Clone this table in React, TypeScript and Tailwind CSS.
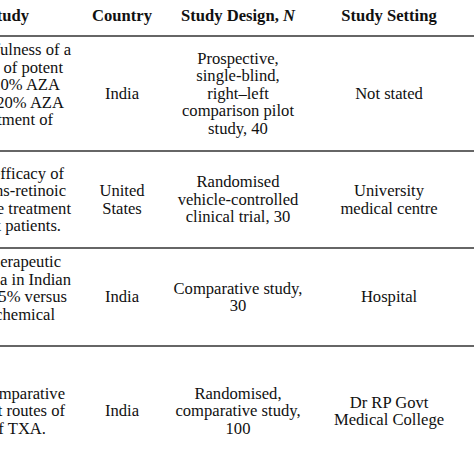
import React from "react";

type Line = { text: string; pad: string };

// first column is clipped on the left in the source, so each line is pinned to its right edge
function ClippedCell({ lines }: { lines: Line[] }) {
  return (
    <div className="flex h-full flex-col justify-center overflow-hidden">
      {lines.map((l, i) => (
        <div key={i} className={`flex justify-end ${l.pad}`}>
          <span className="shrink-0 whitespace-nowrap">{l.text}</span>
        </div>
      ))}
    </div>
  );
}

function Cell({ children }: { children: React.ReactNode }) {
  return <div className="text-center">{children}</div>;
}

const rows = [
  {
    h: "h-[115px]",
    aim: [
      { text: "To assess the usefulness of a", pad: "pr-[1px]" },
      { text: "combination of potent", pad: "pr-[9px]" },
      { text: "steroid with 20% AZA", pad: "pr-[12px]" },
      { text: "cream versus 20% AZA", pad: "pr-[8px]" },
      { text: "alone in the treatment of", pad: "pr-[19px]" },
      { text: "melasma.", pad: "pr-[90px]" },
    ],
    country: ["India"],
    design: ["Prospective,", "single-blind,", "right–left", "comparison pilot", "study, 40"],
    setting: ["Not stated"],
  },
  {
    h: "h-[97px]",
    aim: [
      { text: "To evaluate the efficacy of", pad: "pr-[8px]" },
      { text: "0.1% all-trans-retinoic", pad: "pr-[6px]" },
      { text: "acid in the treatment", pad: "pr-[1px]" },
      { text: "of melasma in black patients.", pad: "pr-[11px]" },
    ],
    country: ["United", "States"],
    design: ["Randomised", "vehicle-controlled", "clinical trial, 30"],
    setting: ["University", "medical centre"],
  },
  {
    h: "h-[98px]",
    aim: [
      { text: "To compare the therapeutic", pad: "pr-[11px]" },
      { text: "efficacy in melasma in Indian", pad: "pr-[1px]" },
      { text: "patients of TCA 3.75% versus", pad: "pr-[5px]" },
      { text: "glycolic acid chemical", pad: "pr-[17px]" },
      { text: "peel.", pad: "pr-[90px]" },
    ],
    country: ["India"],
    design: ["Comparative study,", "30"],
    setting: ["Hospital"],
  },
  {
    h: "h-[130px]",
    aim: [
      { text: "To compare the comparative", pad: "pr-[7px]" },
      { text: "efficacy of different routes of", pad: "pr-[7px]" },
      { text: "administration of TXA.", pad: "pr-[26px]" },
    ],
    country: ["India"],
    design: ["Randomised,", "comparative study,", "100"],
    setting: ["Dr RP Govt", "Medical College"],
  },
];

export default function App() {
  return (
    <div
      className="h-[474px] w-[474px] overflow-hidden bg-white text-[16.6px] leading-[17.4px] text-[#111111]"
      style={{ fontFamily: '"Liberation Serif", "Times New Roman", serif' }}
    >
      {/* Header */}
      <div className="grid h-[35px] grid-cols-[72px_100px_132px_170px] items-center pb-[3px] font-bold">
        <ClippedCell lines={[{ text: "Aim of the Study", pad: "pr-[43px]" }]} />
        <Cell>Country</Cell>
        <Cell>
          Study Design, <i>N</i>
        </Cell>
        <Cell>Study Setting</Cell>
      </div>

      {rows.map((r, i) => (
        <div
          key={i}
          className={`grid grid-cols-[72px_100px_132px_170px] items-center border-t-2 border-[#666666] ${r.h}`}
        >
          <ClippedCell lines={r.aim} />
          <Cell>
            {r.country.map((t) => (
              <div key={t}>{t}</div>
            ))}
          </Cell>
          <Cell>
            {r.design.map((t) => (
              <div key={t}>{t}</div>
            ))}
          </Cell>
          <Cell>
            {r.setting.map((t) => (
              <div key={t}>{t}</div>
            ))}
          </Cell>
        </div>
      ))}
    </div>
  );
}
